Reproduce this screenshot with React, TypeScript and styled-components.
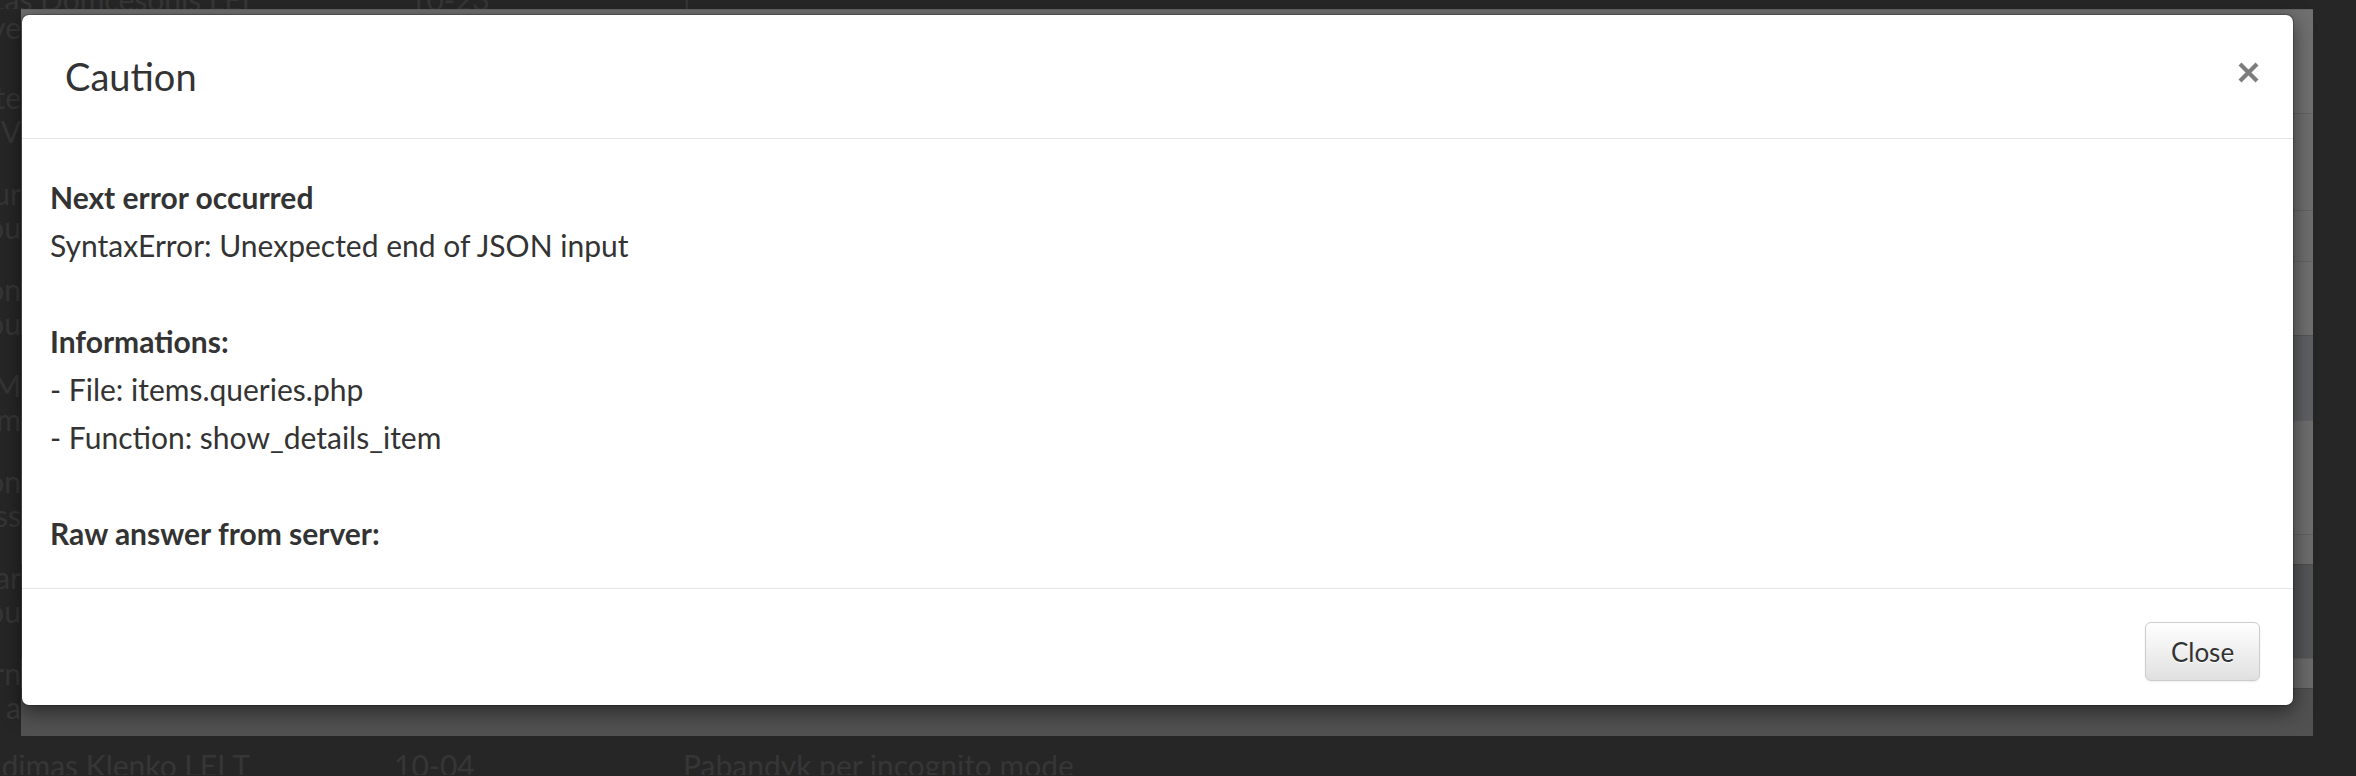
import React from 'react';
import styled, { createGlobalStyle } from 'styled-components';

const GlobalStyle = createGlobalStyle`
  html, body {
    margin: 0;
    padding: 0;
    background: #262626;
  }
  body {
    font-family: Lato, "Open Sans", "Liberation Sans", sans-serif;
  }
`;

const Page = styled.div`
  position: relative;
  width: 2356px;
  height: 776px;
  overflow: hidden;
  display: grid;
  grid-template-columns: 21px 2292px 1fr;
  grid-template-rows: 9px 727px 1fr;
  background: #262626;
  font-size: 30px;
  color: #363636;
`;

const FaintRow = styled.div<{ $align: 'start' | 'end'; $pad: number }>`
  grid-column: 1 / -1;
  display: grid;
  grid-template-columns: 250px 433px 1fr;
  align-items: ${(p) => p.$align};
  padding-top: ${(p) => p.$pad}px;
  overflow: hidden;
  white-space: nowrap;
  line-height: 20px;
`;

const FaintCell = styled.div<{ $right?: boolean; $indent?: number }>`
  display: flex;
  justify-content: ${(p) => (p.$right ? 'flex-end' : 'flex-start')};
  padding-left: ${(p) => p.$indent ?? 0}px;
  overflow: hidden;
`;

const LeftStrip = styled.div`
  grid-column: 1;
  grid-row: 2;
  display: flex;
  flex-direction: column;
  overflow: hidden;
  white-space: nowrap;
  line-height: 34px;
`;

const StripCell = styled.div<{ $h: number; $pt: number }>`
  flex: 0 0 ${(p) => p.$h}px;
  padding-top: ${(p) => p.$pt}px;
  box-sizing: border-box;
`;

const StripLine = styled.div`
  display: flex;
  justify-content: flex-end;
`;

const Panel = styled.div`
  grid-column: 2;
  grid-row: 2;
  display: flex;
  flex-direction: column;
`;

const PanelRow = styled.div<{ $h: number; $bg: string }>`
  flex: 0 0 ${(p) => p.$h}px;
  background: ${(p) => p.$bg};
  box-sizing: border-box;
  border-top: 1px solid rgba(0, 0, 0, 0.1);
`;

const Modal = styled.div`
  position: absolute;
  left: 21px;
  top: 14px;
  width: 2273px;
  box-sizing: border-box;
  background: #fff;
  background-clip: padding-box;
  border: 1px solid rgba(0, 0, 0, 0.2);
  border-radius: 8px;
  box-shadow: 0 6px 20px rgba(0, 0, 0, 0.5);
  color: #333;
`;

const Header = styled.div`
  height: 124px;
  box-sizing: border-box;
  display: flex;
  align-items: center;
  justify-content: space-between;
  padding: 0 33px 0 43px;
  border-bottom: 1px solid #e5e5e5;
`;

const Title = styled.h4`
  margin: 0;
  font-size: 38px;
  font-weight: 400;
  line-height: 1.1;
  color: #333;
`;

const CloseX = styled.button`
  display: flex;
  padding: 0;
  margin-bottom: 9px;
  border: none;
  background: none;
  cursor: pointer;
`;

const Body = styled.div`
  padding: 34px 27px 31px 28px;
  font-size: 30px;
  line-height: 48px;
`;

const Line = styled.div<{ $bold?: boolean }>`
  height: 48px;
  font-weight: ${(p) => (p.$bold ? 700 : 400)};
  white-space: pre;
`;

const Footer = styled.div`
  display: flex;
  justify-content: flex-end;
  padding: 33px 33px 24px;
  border-top: 1px solid #e5e5e5;
`;

const Button = styled.button`
  width: 115px;
  height: 59px;
  font-family: inherit;
  font-size: 26px;
  color: #333;
  border: 1px solid #ccc;
  border-radius: 6px;
  background: linear-gradient(to bottom, #fff 0%, #e0e0e0 100%);
  box-shadow: 0 1px 2px rgba(0, 0, 0, 0.08);
  text-shadow: 0 1px 0 #fff;
  cursor: pointer;
`;

const panelRows = [
  { h: 104, bg: '#707070' },
  { h: 97, bg: '#6e6e6e' },
  { h: 51, bg: '#6e6e6e' },
  { h: 74, bg: '#6f6f6f' },
  { h: 85, bg: '#5f6063' },
  { h: 114, bg: '#6e6e6e' },
  { h: 30, bg: '#6c6c6c' },
  { h: 94, bg: '#545557' },
  { h: 30, bg: '#6a6a6a' },
  { h: 48, bg: '#515151' },
];

const stripCells = [
  ['Gyve'],
  ['Pakeiste', 'LEI V'],
  ['Jonas Saltur', 'Vilniaus kabou'],
  ['Tomas Pilon', 'Kaunas Vilnou'],
  ['Asta LEI M', 'Ramunas Stam'],
  ['Rokas Jon', 'Kaunas Adress'],
  ['Matas Skar', 'Vilnius kanou'],
  ['Lukas Varn', 'LEI a'],
];

const lines: { text: string; bold?: boolean }[] = [
  { text: 'Next error occurred', bold: true },
  { text: 'SyntaxError: Unexpected end of JSON input' },
  { text: '' },
  { text: 'Informations:', bold: true },
  { text: '- File: items.queries.php' },
  { text: '- Function: show_details_item' },
  { text: '' },
  { text: 'Raw answer from server:', bold: true },
];

const App: React.FC = () => {
  return (
    <>
      <GlobalStyle />
      <Page>
        <FaintRow $align="end" $pad={0}>
          <FaintCell $right>Rimantas Domcesonis LEI</FaintCell>
          <FaintCell $indent={159}>10-23</FaintCell>
          <FaintCell>|</FaintCell>
        </FaintRow>

        <LeftStrip>
          {stripCells.map((cell, i) => (
            <StripCell key={i} $h={i === 0 ? 55 : 96} $pt={i === 0 ? 1 : 16}>
              {cell.map((t) => (
                <StripLine key={t}>{t}</StripLine>
              ))}
            </StripCell>
          ))}
        </LeftStrip>

        <Panel>
          {panelRows.map((r, i) => (
            <PanelRow key={i} $h={r.h} $bg={r.bg} />
          ))}
        </Panel>

        <FaintRow $align="start" $pad={19}>
          <FaintCell $right>Vladimas Klenko LEI T</FaintCell>
          <FaintCell $indent={144}>10-04</FaintCell>
          <FaintCell>Pabandyk per incognito mode</FaintCell>
        </FaintRow>

        <Modal>
          <Header>
            <Title>Caution</Title>
            <CloseX aria-label="Close">
              <svg width="23" height="23" viewBox="0 0 23 23">
                <path d="M3 3 L20 20 M20 3 L3 20" stroke="#7d7d7d" strokeWidth="4.2" />
              </svg>
            </CloseX>
          </Header>
          <Body>
            {lines.map((l, i) => (
              <Line key={i} $bold={l.bold}>
                {l.text}
              </Line>
            ))}
          </Body>
          <Footer>
            <Button>Close</Button>
          </Footer>
        </Modal>
      </Page>
    </>
  );
};

export default App;
